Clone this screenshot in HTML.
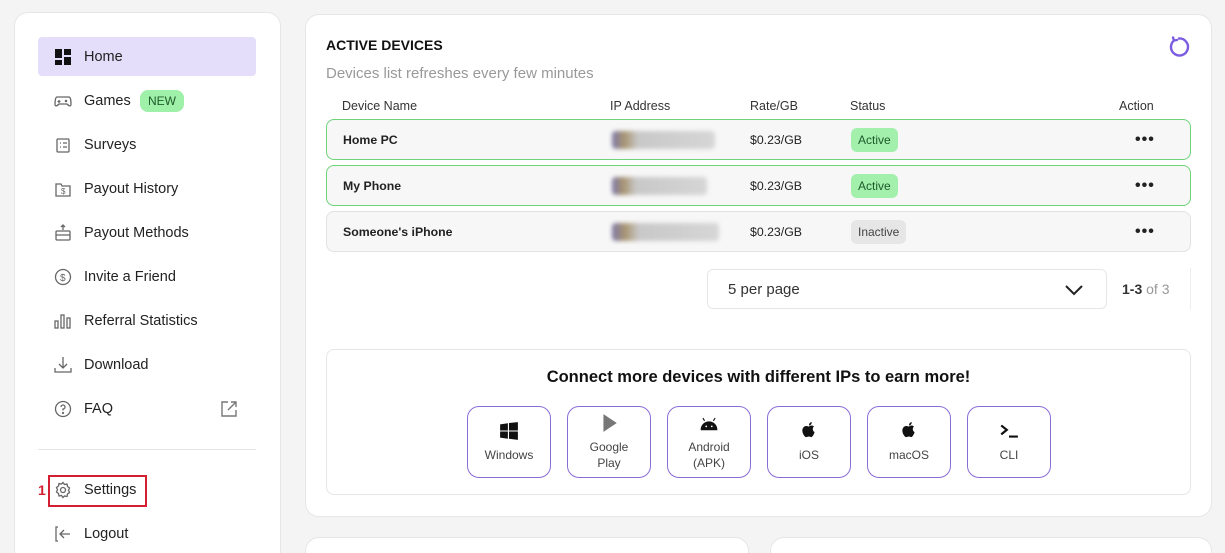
<!DOCTYPE html>
<html style="width:1225px;height:553px;overflow:hidden"><head><style>
*{box-sizing:border-box;margin:0;padding:0}
body{width:1225px;height:553px;overflow:hidden;background:#f4f4f4;font-family:"Liberation Sans",sans-serif;color:#222;position:relative}
.card{position:absolute;background:#fff;border:1px solid #e6e6e6;border-radius:14px}
.nav{position:absolute;left:38px;width:218px;height:40px;font-size:14.5px;color:#222}
.nav svg{position:absolute;left:16px;top:11px;width:18px;height:18px}
.nav span.t{position:absolute;left:46px;top:12px}
.abs{position:absolute}
.row{position:absolute;left:326px;width:865px;height:41px;border-radius:8px;background:#f7f7f7;font-size:12.3px}
.row.g{border:1px solid #6fd37a}
.row.n{border:1px solid #e2e2e2}
.row>*{position:absolute;top:50%;transform:translateY(-50%)}
.blur{height:18px;border-radius:4px;background:linear-gradient(90deg,#7c78a8 0,#a89470 12%,#c8c8c8 25%,#d6d6d6 100%);filter:blur(2px)}
.pill{padding:5px 7px;border-radius:6px;font-size:12px}
.btn{position:absolute;top:406px;width:84px;height:72px;border:1px solid #8a6cd6;border-radius:12px;display:flex;flex-direction:column;align-items:center;justify-content:center;font-size:12px;color:#444;text-align:center;line-height:16px}
.btn svg{width:20px;height:20px;margin-bottom:6px}
</style></head><body>
<div class="card" style="left:14px;top:12px;width:267px;height:560px"></div>
<div class="abs" style="left:38px;top:37px;width:218px;height:39px;background:#e5defa;border-radius:4px"></div>

<div class="nav" style="top:37px"><svg viewBox="0 0 18 18"><rect x="1" y="1" width="7" height="9" fill="#111"/><rect x="10" y="1" width="7" height="6" fill="#111"/><rect x="1" y="12" width="7" height="5" fill="#111"/><rect x="10" y="9" width="7" height="8" fill="#111"/></svg><span class="t">Home</span></div>
<div class="nav" style="top:81px"><svg viewBox="0 0 18 18" fill="none" stroke="#666" stroke-width="1.3"><path d="M3 5h12c1.5 0 2 4 2 7s-2 2-4 0H5c-2 2-4 3-4 0s.5-7 2-7z"/><path d="M5 8v3M3.5 9.5h3"/><circle cx="12" cy="9" r=".6"/></svg><span class="t">Games</span><span class="abs" style="left:102px;top:9px;background:#9ff0a8;border-radius:8px;padding:4px 8px;font-size:12px;color:#1f5b2a">NEW</span></div>
<div class="nav" style="top:125px"><svg viewBox="0 0 18 18" fill="none" stroke="#666" stroke-width="1.3"><rect x="3" y="3" width="12" height="13" rx="1"/><path d="M6 7h1M9 7h4M6 11h1M9 11h4"/></svg><span class="t">Surveys</span></div>
<div class="nav" style="top:169px"><svg viewBox="0 0 18 18" fill="none" stroke="#666" stroke-width="1.3"><path d="M2 4h5l1 2h8v10H2z"/><text x="7" y="14" font-size="8" fill="#666" stroke="none">$</text></svg><span class="t">Payout History</span></div>
<div class="nav" style="top:213px"><svg viewBox="0 0 18 18" fill="none" stroke="#666" stroke-width="1.3"><rect x="2" y="7" width="14" height="9" rx="1"/><path d="M2 11h14M9 1v5M7 3l2-2 2 2"/></svg><span class="t">Payout Methods</span></div>
<div class="nav" style="top:257px"><svg viewBox="0 0 18 18" fill="none" stroke="#666" stroke-width="1.3"><circle cx="9" cy="9" r="7.5"/><text x="6" y="13" font-size="10" fill="#666" stroke="none">$</text></svg><span class="t">Invite a Friend</span></div>
<div class="nav" style="top:301px"><svg viewBox="0 0 18 18" fill="none" stroke="#666" stroke-width="1.3"><rect x="1" y="9" width="3" height="7"/><rect x="7" y="3" width="3" height="13"/><rect x="13" y="6" width="3" height="10"/></svg><span class="t">Referral Statistics</span></div>
<div class="nav" style="top:345px"><svg viewBox="0 0 18 18" fill="none" stroke="#666" stroke-width="1.3"><path d="M9 1v11M5 8l4 4 4-4M1 12v4h16v-4"/></svg><span class="t">Download</span></div>
<div class="nav" style="top:389px"><svg viewBox="0 0 18 18" fill="none" stroke="#666" stroke-width="1.3"><circle cx="9" cy="9" r="7.5"/><path d="M7 7a2 2 0 1 1 2 2v1.5"/><circle cx="9" cy="13" r=".5"/></svg><span class="t">FAQ</span><svg viewBox="0 0 18 18" style="left:182px" fill="none" stroke="#777" stroke-width="1.4"><path d="M8 2H2v14h14v-6M11 2h5v5M16 2L8 10"/></svg></div>
<div class="abs" style="left:38px;top:449px;width:218px;height:1px;background:#e5e5e5"></div>
<div class="nav" style="top:470px"><svg viewBox="0 0 18 18" fill="none" stroke="#666" stroke-width="1.3"><circle cx="9" cy="9" r="2.5"/><path d="M9 1.5l1.5 2 2.5-.5.5 2.5 2 1.5-1 2.3 1 2.2-2 1.5-.5 2.5-2.5-.5L9 16.5l-1.5-2-2.5.5-.5-2.5-2-1.5 1-2.2-1-2.3 2-1.5.5-2.5 2.5.5z"/></svg><span class="t">Settings</span></div>
<div class="abs" style="left:48px;top:475px;width:99px;height:32px;border:2px solid #d32030"></div>
<div class="abs" style="left:38px;top:482px;font-size:14px;font-weight:bold;color:#d32030">1</div>
<div class="nav" style="top:514px"><svg viewBox="0 0 18 18" fill="none" stroke="#666" stroke-width="1.3"><path d="M4 2H2v14h2M16 9H6M10 5L6 9l4 4"/></svg><span class="t">Logout</span></div>

<div class="card" style="left:305px;top:14px;width:907px;height:503px"></div>
<div class="card" style="left:305px;top:537px;width:444px;height:30px"></div>
<div class="card" style="left:770px;top:537px;width:442px;height:30px"></div>

<div class="abs" style="left:326px;top:37px;font-size:14px;font-weight:bold;color:#111">ACTIVE DEVICES</div>
<div class="abs" style="left:326px;top:65px;font-size:15px;color:#999">Devices list refreshes every few minutes</div>
<svg class="abs" style="left:1167px;top:35px" width="24" height="24" viewBox="0 0 24 24" fill="none" stroke="#7c5ce0" stroke-width="2.4" stroke-linecap="round" stroke-linejoin="round"><path d="M7 5.5A8.5 8.5 0 1 0 12 3.5"/><path d="M6 2.5L7 5.5 10 5"/></svg>
<div class="abs" style="top:99px;font-size:12.5px;color:#333;left:342px">Device Name</div>
<div class="abs" style="top:99px;font-size:12.5px;color:#333;left:610px">IP Address</div>
<div class="abs" style="top:99px;font-size:12.5px;color:#333;left:750px">Rate/GB</div>
<div class="abs" style="top:99px;font-size:12.5px;color:#333;left:850px">Status</div>
<div class="abs" style="top:99px;font-size:12.5px;color:#333;left:1119px">Action</div>

<div class="row g" style="top:119px"><b style="left:16px">Home PC</b><div class="blur" style="left:285px;width:103px"></div><span style="left:423px">$0.23/GB</span><span class="pill" style="left:524px;background:#a3f0ad;color:#1d5a2a">Active</span><b style="left:808px;font-size:16px;letter-spacing:1px">•••</b></div>
<div class="row g" style="top:165px"><b style="left:16px">My Phone</b><div class="blur" style="left:285px;width:95px"></div><span style="left:423px">$0.23/GB</span><span class="pill" style="left:524px;background:#a3f0ad;color:#1d5a2a">Active</span><b style="left:808px;font-size:16px;letter-spacing:1px">•••</b></div>
<div class="row n" style="top:211px"><b style="left:16px">Someone's iPhone</b><div class="blur" style="left:285px;width:107px"></div><span style="left:423px">$0.23/GB</span><span class="pill" style="left:524px;background:#e6e6e6;color:#444">Inactive</span><b style="left:808px;font-size:16px;letter-spacing:1px">•••</b></div>

<div class="abs" style="left:707px;top:269px;width:400px;height:40px;border:1px solid #e6e6e6;border-radius:6px"><span class="abs" style="left:20px;top:11px;font-size:15px;color:#333">5 per page</span><svg class="abs" style="left:356px;top:13px" width="20" height="14" viewBox="0 0 20 14" fill="none" stroke="#222" stroke-width="2"><path d="M2 3l8 8 8-8"/></svg></div>
<div class="abs" style="left:1122px;top:281px;font-size:14px;color:#999"><b style="color:#333">1-3</b> of 3</div>
<div class="abs" style="left:1190px;top:268px;width:1px;height:42px;background:#eee"></div>

<div class="abs" style="left:326px;top:349px;width:865px;height:146px;border:1px solid #e6e6e6;border-radius:8px"></div>
<div class="abs" style="left:326px;width:865px;top:368px;text-align:center;font-size:16.5px;font-weight:bold;color:#111">Connect more devices with different IPs to earn more!</div>
<div class="btn" style="left:467px"><svg viewBox="0 0 18 18" fill="#111"><path d="M1 3l7-1v6.5H1zM9 1.8L17 1v7.5H9zM1 9.5h7V16l-7-1zM9 9.5h8V17l-8-1z"/></svg>Windows</div>
<div class="btn" style="left:567px"><svg viewBox="0 0 18 18"><path d="M4 1l12 8-12 8z" fill="#777"/></svg>Google<br>Play</div>
<div class="btn" style="left:667px"><svg viewBox="0 0 18 18" fill="#111"><path d="M2 15a7 7 0 0 1 14 0z M5 7L3.5 4.5M13 7l1.5-2.5" stroke="#111"/><circle cx="6.5" cy="12" r=".8" fill="#fff"/><circle cx="11.5" cy="12" r=".8" fill="#fff"/></svg>Android<br>(APK)</div>
<div class="btn" style="left:767px"><svg viewBox="0 0 18 18" fill="#111"><path d="M9 5c1-1 3-1.5 4.5 0-1.5 1-1.5 4 .5 5-.5 2-2 4.5-3 4.5s-1-.5-2-.5-1.5.5-2.5.5C5 14.5 3 11 3 8.5S5 4.5 6.5 4.5 8 5 9 5zM9 4c0-1.5 1-3 2.5-3 0 1.5-1 3-2.5 3z"/></svg>iOS</div>
<div class="btn" style="left:867px"><svg viewBox="0 0 18 18" fill="#111"><path d="M9 5c1-1 3-1.5 4.5 0-1.5 1-1.5 4 .5 5-.5 2-2 4.5-3 4.5s-1-.5-2-.5-1.5.5-2.5.5C5 14.5 3 11 3 8.5S5 4.5 6.5 4.5 8 5 9 5zM9 4c0-1.5 1-3 2.5-3 0 1.5-1 3-2.5 3z"/></svg>macOS</div>
<div class="btn" style="left:967px"><svg viewBox="0 0 18 18" fill="none" stroke="#111" stroke-width="2"><path d="M2 4l5 4-5 4M9 14h8"/></svg>CLI</div>
</body></html>
